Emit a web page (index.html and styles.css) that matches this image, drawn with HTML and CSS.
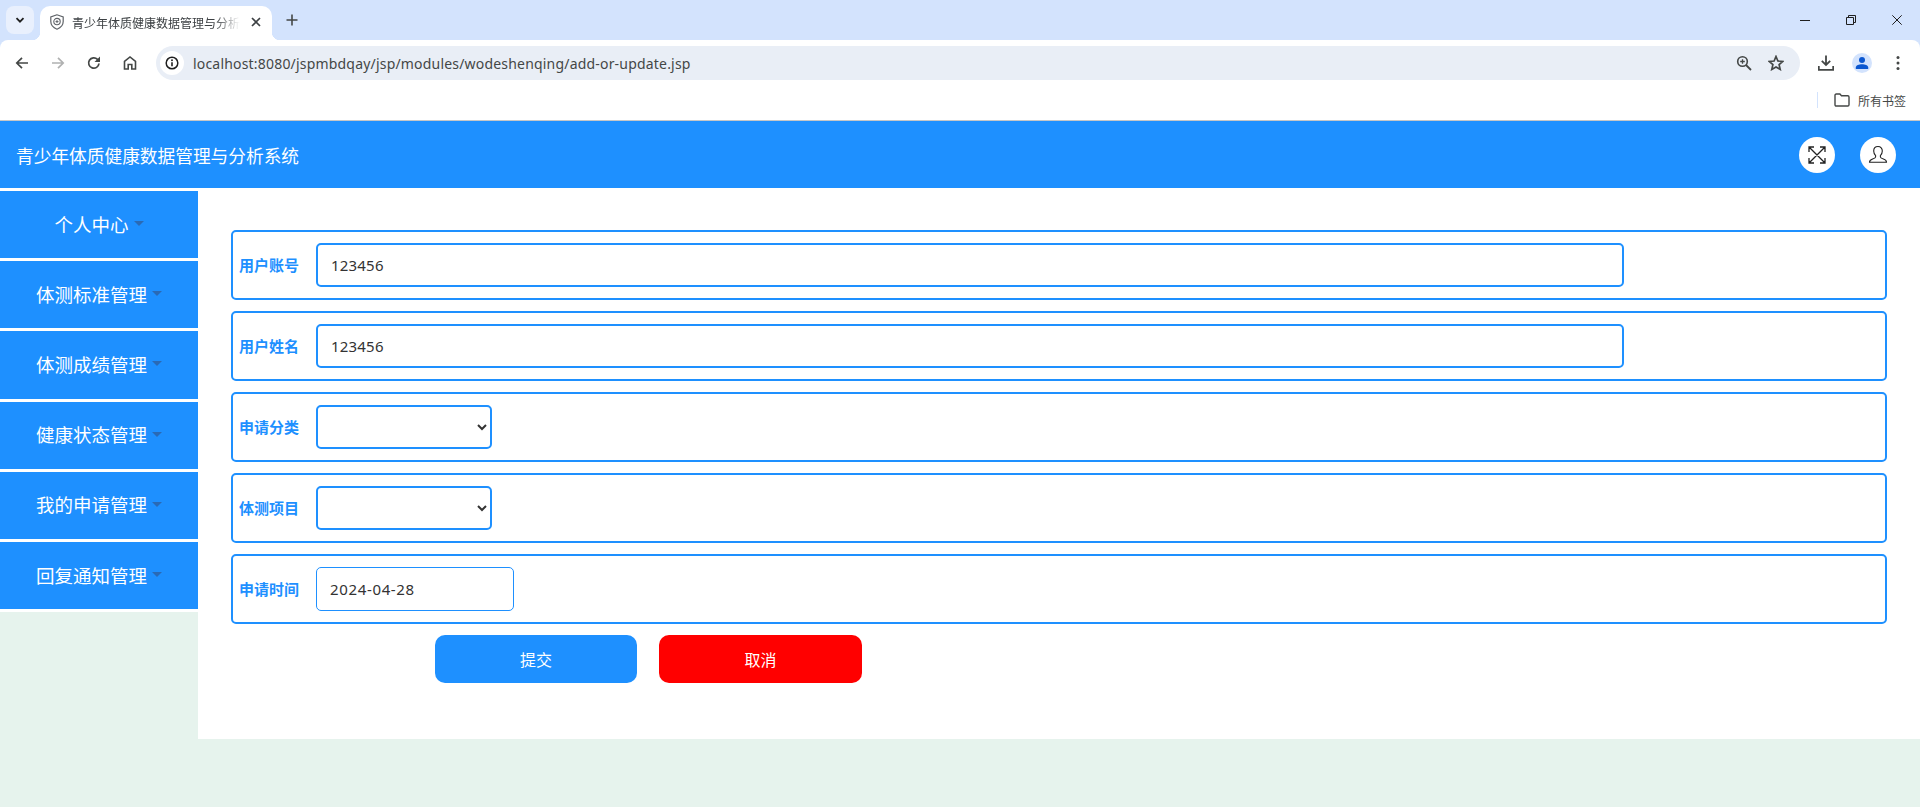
FILE: index.html
```html
<!DOCTYPE html>
<html lang="zh-CN">
<head>
<meta charset="utf-8">
<title>青少年体质健康数据管理与分析系统</title>
<link rel="stylesheet" href="styles.css">
</head>
<body>
<div class="browser">
  <div class="tabstrip">
    <div class="tabsearch"><svg width="12" height="12" viewBox="0 0 12 12"><path d="M2.500 4.200 6 7.700l3.500-3.500" fill="none" stroke="#1f1f1f" stroke-width="1.800"/></svg></div>
    <div class="tab">
      <svg class="favicon" width="16" height="16" viewBox="0 0 16 16"><path d="M8 .8 1.800 3v4.600c0 3.500 2.500 6.200 6.200 7.600 3.700-1.400 6.200-4.100 6.200-7.600V3z" fill="none" stroke="#5f6368" stroke-width="1.200"/><circle cx="8" cy="7.600" r="3.200" fill="none" stroke="#5f6368" stroke-width="1.100"/><path d="M8 6.100V9.100M6.500 7.600h3" stroke="#5f6368" stroke-width="1"/></svg>
      <span class="tabtitle">青少年体质健康数据管理与分析系统</span>
      <svg class="tabclose" width="10" height="10" viewBox="0 0 10 10"><path d="M1 1l8 8M9 1 1 9" stroke="#3c4043" stroke-width="1.700"/></svg>
    </div>
    <svg class="newtab" width="12" height="12" viewBox="0 0 12 12"><path d="M6 .5v11M.5 6h11" stroke="#444746" stroke-width="1.600"/></svg>
    <div class="winctl">
      <svg width="10" height="10" viewBox="0 0 10 10"><path d="M0 5.500h10" stroke="#1f1f1f" stroke-width="1"/></svg>
      <svg width="10" height="10" viewBox="0 0 10 10"><path d="M2.500 2V.5h7v7H8M.5 2.500h7v7h-7z" fill="none" stroke="#1f1f1f" stroke-width="1"/></svg>
      <svg width="10" height="10" viewBox="0 0 10 10"><path d="M.3.300l9.400 9.400M9.700.3.300 9.700" stroke="#1f1f1f" stroke-width="1"/></svg>
    </div>
  </div>
  <div class="toolbar">
    <svg class="tb" width="16" height="16" viewBox="0 0 16 16"><path d="M14 8H3M8 2.800 2.800 8 8 13.200" fill="none" stroke="#444746" stroke-width="1.700"/></svg>
    <svg class="tb tb-nav" width="16" height="16" viewBox="0 0 16 16"><path d="M2 8h11M8 2.800 13.200 8 8 13.200" fill="none" stroke="#b0b1b1" stroke-width="1.700"/></svg>
    <svg class="tb tb-nav" width="16" height="16" viewBox="0 0 16 16"><path d="M13 8.500A5.200 5.200 0 1 1 11.500 4.300L13.500 6" fill="none" stroke="#444746" stroke-width="1.700"/><path d="M14 1.500V7H8.500z" fill="#444746"/></svg>
    <svg class="tb tb-nav" width="16" height="16" viewBox="0 0 16 16"><path d="M2.500 14V6.500L8 2l5.500 4.500V14h-3.700V9.500H6.200V14z" fill="none" stroke="#444746" stroke-width="1.600"/></svg>
    <div class="omnibox">
      <span class="infochip"><svg width="14" height="14" viewBox="0 0 14 14"><circle cx="7" cy="7" r="5.800" fill="none" stroke="#1f1f1f" stroke-width="1.500"/><path d="M7 6.200v4" stroke="#1f1f1f" stroke-width="1.600"/><circle cx="7" cy="4.200" r=".95" fill="#1f1f1f"/></svg></span>
      <span class="url">localhost:8080/jspmbdqay/jsp/modules/wodeshenqing/add-or-update.jsp</span>
      <svg class="zoomicon" width="16" height="16" viewBox="0 0 16 16"><circle cx="6.500" cy="6.500" r="4.800" fill="none" stroke="#444746" stroke-width="1.600"/><path d="M10 10l5 5" stroke="#444746" stroke-width="1.800"/><path d="M6.500 4.200v4.600M4.200 6.500h4.600" stroke="#444746" stroke-width="1.300"/></svg>
      <svg class="staricon" width="16" height="16" viewBox="0 0 16 16"><path d="M8 1.500 9.900 6l4.900.4-3.700 3.200 1.100 4.800L8 11.900l-4.200 2.500 1.100-4.800L1.200 6.400 6.100 6z" fill="none" stroke="#444746" stroke-width="1.700"/></svg>
    </div>
    <svg class="tb tb-dl" width="16" height="16" viewBox="0 0 16 16"><path d="M8 .5v9.500M3.800 5.800 8 10l4.200-4.200M.8 11v3.800h14.400V11" fill="none" stroke="#444746" stroke-width="1.800"/></svg>
    <span class="avatar"><svg width="14" height="14" viewBox="0 0 14 14"><circle cx="7" cy="4" r="3" fill="#0b57d0"/><path d="M.8 13v-1.500C.8 9.500 4 8.300 7 8.300s6.200 1.200 6.200 3.200V13z" fill="#0b57d0"/></svg></span>
    <svg class="tb tb-more" width="4" height="16" viewBox="0 0 4 16"><circle cx="2" cy="2.500" r="1.500" fill="#444746"/><circle cx="2" cy="8" r="1.500" fill="#444746"/><circle cx="2" cy="13.500" r="1.500" fill="#444746"/></svg>
  </div>
  <div class="bookmarks">
    <span class="bm-sep"></span>
    <svg width="16" height="14" viewBox="0 0 16 14"><path d="M1 2.200c0-.6.500-1.200 1.200-1.200h3.700l1.600 1.800h6.300c.7 0 1.200.5 1.200 1.200v7.800c0 .7-.5 1.200-1.200 1.200H2.200c-.7 0-1.200-.5-1.200-1.200z" fill="none" stroke="#444746" stroke-width="1.400"/></svg>
    <span class="bm-text">所有书签</span>
  </div>
</div>

<div class="page">
  <header class="topbar">
    <div class="systitle">青少年体质健康数据管理与分析系统</div>
    <div class="topicons">
      <span class="roundicon"><svg width="20" height="20" viewBox="0 0 20 20"><path d="M2 2l16 16M18 2 2 18M2 7V2h5M13 2h5v5M2 13v5h5M18 13v5h-5" fill="none" stroke="#222" stroke-width="1.300"/></svg></span>
      <span class="roundicon"><svg width="20" height="20" viewBox="0 0 20 20"><path d="M10 1.500c-2.800 0-4.300 2-4.300 4.500 0 1.900.8 3.500 1.900 4.600v1.500c0 .8-1 1.300-3 2-1.800.6-3.100 1.300-3.100 3.200h17c0-1.900-1.300-2.600-3.100-3.200-2-.7-3-1.200-3-2v-1.500c1.100-1.100 1.900-2.700 1.900-4.600 0-2.500-1.500-4.500-4.300-4.500z" fill="none" stroke="#222" stroke-width="1.100"/></svg></span>
    </div>
  </header>
  <div class="content">
    <nav class="sidebar">
      <div class="menuitem">个人中心<i class="caret"></i></div>
      <div class="menuitem">体测标准管理<i class="caret"></i></div>
      <div class="menuitem">体测成绩管理<i class="caret"></i></div>
      <div class="menuitem">健康状态管理<i class="caret"></i></div>
      <div class="menuitem">我的申请管理<i class="caret"></i></div>
      <div class="menuitem">回复通知管理<i class="caret"></i></div>
    </nav>
    <main class="panel">
      <form class="form">
        <div class="row"><label class="label">用户账号</label><input class="field wide" type="text" value="123456"></div>
        <div class="row"><label class="label">用户姓名</label><input class="field wide" type="text" value="123456"></div>
        <div class="row"><label class="label">申请分类</label><select class="field pick"><option></option></select></div>
        <div class="row"><label class="label">体测项目</label><select class="field pick"><option></option></select></div>
        <div class="row"><label class="label">申请时间</label><input class="field date" type="text" value="2024-04-28"></div>
        <div class="actions">
          <button class="btn submit" type="button">提交</button>
          <button class="btn cancel" type="button">取消</button>
        </div>
      </form>
    </main>
  </div>
</div>
</body>
</html>
```

FILE: styles.css
```css
* { box-sizing: border-box; }
html, body { margin: 0; height: 100%; }
body {
  display: flex;
  flex-direction: column;
  background: #e6f3ed;
  font-family: "Noto Sans", "Noto Sans CJK SC", sans-serif;
  overflow: hidden;
}

/* browser chrome */
.browser { flex: none; background: #d3e3fd; }
.tabstrip { height: 40px; display: flex; align-items: flex-end; }
.tabsearch {
  width: 28px; height: 28px; margin: 0 6px 6px 6px; border-radius: 8px;
  background: #e9f0fd; display: flex; align-items: center; justify-content: center;
}
.tab {
  position: relative;
  width: 232px; height: 34px;
  background: #fff; border-radius: 10px 10px 0 0;
  display: flex; align-items: center; padding: 0 11px 2px 9px;
}
.tab::before, .tab::after {
  content: ""; position: absolute; bottom: 0; width: 8px; height: 8px;
}
.tab::before { left: -8px; background: radial-gradient(circle at 0 0, transparent 8px, #fff 8.5px); }
.tab::after { right: -8px; background: radial-gradient(circle at 100% 0, transparent 8px, #fff 8.5px); }
.favicon { flex: none; }
.tabtitle {
  width: 168px; margin-left: 7px; white-space: nowrap; overflow: hidden;
  font: 12px "Noto Sans CJK SC", sans-serif; color: #3c4043;
  -webkit-mask-image: linear-gradient(to right, #000 85%, transparent 100%);
  mask-image: linear-gradient(to right, #000 85%, transparent 100%);
}
.tabclose { flex: none; margin-left: 11px; }
.newtab { margin: 0 0 14px 14px; }
.winctl {
  margin-left: auto; display: flex; gap: 36px; padding: 0 18px 15px 0;
}
.toolbar {
  height: 40px; background: #fff; border-radius: 8px 8px 0 0;
  display: flex; align-items: center; padding: 6px 0 0 14px;
}
.tb { flex: none; }
.tb-nav { margin-left: 20px; }
.omnibox {
  flex: none; width: 1644px; height: 34px; margin-left: 18px; border-radius: 17px;
  background: #e9eef6; display: flex; align-items: center; padding: 0 16px 0 4px;
}
.infochip {
  width: 24px; height: 24px; border-radius: 50%; background: #fff;
  display: flex; align-items: center; justify-content: center;
}
.url { margin-left: 9px; font-size: 14px; letter-spacing: .19px; color: #444746; white-space: nowrap; }
.zoomicon { margin-left: auto; }
.staricon { margin-left: 16px; }
.tb-dl { margin-left: 18px; }
.avatar {
  width: 20px; height: 20px; margin-left: 18px; border-radius: 50%; background: #d3e3fd;
  display: flex; align-items: center; justify-content: center;
}
.tb-more { margin-left: 24px; }
.bookmarks {
  height: 41px; background: #fff; border-bottom: 1px solid #c7c7c7;
  display: flex; align-items: center; justify-content: flex-end; padding-right: 14px;
}
.bm-sep { width: 1px; height: 16px; background: #d3e3fd; margin-right: 16px; }
.bm-text { margin-left: 8px; font: 12px "Noto Sans CJK SC", sans-serif; color: #444746; }

/* page */
.page { flex: 1; min-height: 0; }
.topbar {
  height: 67px; background: #1e90ff; color: #fff;
  display: flex; align-items: center; justify-content: space-between; padding: 0 24px 0 16px;
}
.systitle { font: 17.700px "Noto Sans CJK SC", sans-serif; white-space: nowrap; }
.topicons { display: flex; gap: 25px; }
.roundicon {
  width: 36px; height: 36px; border-radius: 50%; background: #fff;
  display: flex; align-items: center; justify-content: center;
}
.content { display: flex; align-items: flex-start; }
.sidebar {
  flex: none; width: 198px; background: #fff; padding-top: 3px;
}
.menuitem {
  height: 67.200px; margin-bottom: 3px; padding-bottom: 2px; background: #1e90ff; color: #fff;
  display: flex; align-items: center; justify-content: center;
  font: 18.500px "Noto Sans CJK SC", sans-serif;
}
.caret {
  width: 0; height: 0; margin-left: 5px;
  border: 5px solid transparent; border-top-color: #2a6ab5; border-bottom: 0;
}
.panel { flex: 1; background: #fff; height: 551px; padding: 42px 33px 0; }
.form { display: flex; flex-direction: column; gap: 11px; }
.row {
  height: 70px; border: 2px solid #1e90ff; border-radius: 5px;
  display: flex; align-items: center; padding-left: 6px;
}
.label {
  width: 77px; flex: none; padding-bottom: 1px;
  font: bold 15px "Noto Sans CJK SC", sans-serif; color: #1e90ff;
}
.field {
  height: 44px; background: #fff; border: 2px solid #1e90ff; border-radius: 5px;
  font: 15px "Noto Sans", sans-serif; color: #333; padding: 0 13px; letter-spacing: .2px; outline: none;
}
.wide { width: 1308px; }
.pick { width: 176px; padding: 0 8px; }
.date { width: 198px; border-width: 1px; letter-spacing: .65px; }
.actions { display: flex; gap: 22px; padding-left: 204px; }
.btn {
  width: 202px; height: 48px; border: 0; border-radius: 10px; color: #fff;
  font: 16px "Noto Sans CJK SC", sans-serif; padding: 0;
}
.submit { background: #1e90ff; }
.cancel { background: #f00; width: 203px; }
```
